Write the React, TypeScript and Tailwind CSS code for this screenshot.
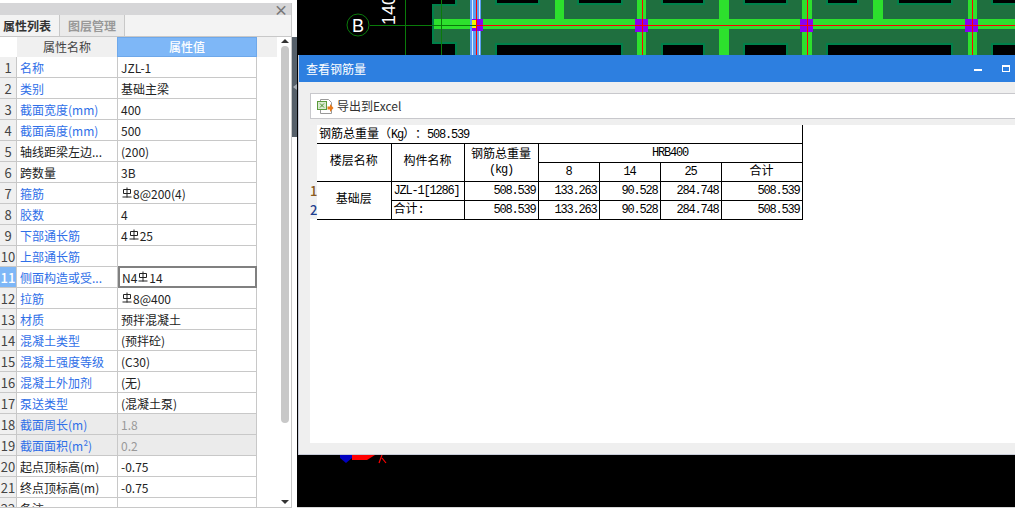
import { FC, ReactNode } from "react";

const SANS = "font-['Noto_Sans_CJK_SC','Noto_Sans',sans-serif]";
const MONO = "font-['Liberation_Mono','Noto_Sans_CJK_SC',monospace]";

// rebar grade symbol from the drawing font
const Rebar: FC = () => (
  <svg width="12" height="12" viewBox="0 0 12 12" className="inline-block -translate-y-[2px] align-middle">
    <path d="M2.5 2.5h7v4h-7z M6 0.5v10 M1.5 10h9" fill="none" stroke="#222" strokeWidth="1" />
  </svg>
);

type Row = { name: string; value?: ReactNode; blue?: boolean; off?: boolean; active?: boolean };

const rows: Row[] = [
  { name: "名称", value: "JZL-1", blue: true },
  { name: "类别", value: "基础主梁", blue: true },
  { name: "截面宽度(mm)", value: "400", blue: true },
  { name: "截面高度(mm)", value: "500", blue: true },
  { name: "轴线距梁左边...", value: "(200)" },
  { name: "跨数量", value: "3B" },
  { name: "箍筋", value: <><Rebar />8@200(4)</>, blue: true },
  { name: "胶数", value: "4", blue: true },
  { name: "下部通长筋", value: <>4<Rebar />25</>, blue: true },
  { name: "上部通长筋", blue: true },
  { name: "侧面构造或受...", value: <>N4<Rebar />14</>, blue: true, active: true },
  { name: "拉筋", value: <><Rebar />8@400</>, blue: true },
  { name: "材质", value: "预拌混凝土", blue: true },
  { name: "混凝土类型", value: "(预拌砼)", blue: true },
  { name: "混凝土强度等级", value: "(C30)", blue: true },
  { name: "混凝土外加剂", value: "(无)", blue: true },
  { name: "泵送类型", value: "(混凝土泵)", blue: true },
  { name: "截面周长(m)", value: "1.8", blue: true, off: true },
  { name: "截面面积(m²)", value: "0.2", blue: true, off: true },
  { name: "起点顶标高(m)", value: "-0.75" },
  { name: "终点顶标高(m)", value: "-0.75" },
  { name: "备注" },
];

const PropertyPanel: FC = () => (
  <div className={`flex h-full w-[297px] shrink-0 flex-col overflow-hidden bg-white pt-[3px] text-[12px] ${SANS}`}>
    <div className="flex h-[12px] w-[292px] shrink-0 items-center justify-end border-r border-[#c8c8c8] bg-[#d6d6d8] pr-[3px]">
      <span className="text-[14px] font-bold leading-none text-[#777]">×</span>
    </div>
    <div className="flex h-[22px] w-[292px] shrink-0 border-b border-r border-[#c8c8c8] bg-[#f3f3f3]">
      <div className="flex w-[60px] items-center border-r border-[#c8c8c8] bg-[#f3f3f3] pl-[3px] text-[12px] font-bold text-[#333]">
        属性列表
      </div>
      <div className="flex w-[65px] items-center justify-center border-r border-[#c8c8c8] bg-[#eaeaea] text-[12px] font-bold text-[#999]">
        图层管理
      </div>
    </div>
    <div className="flex min-h-0 flex-1">
      <div className="relative flex w-[292px] flex-col overflow-hidden border-b border-r border-[#c8c8c8]">
        <div className="flex h-[20px] w-[277px] shrink-0 bg-[#f0f0f0]">
          <div className="w-[17px] bg-white" />
          <div className="flex w-[100px] items-center justify-center text-[12px] text-[#444]">属性名称</div>
          <div className="flex w-[140px] items-center justify-center border border-[#6ea8ea] bg-[#7eb7f7] font-medium text-white">
            属性值
          </div>
        </div>
        <div className="min-h-0 flex-1 overflow-hidden">
          {rows.map((row, i) => (
            <div key={row.name} className="flex h-[21px] w-[257px] shrink-0 border-b border-[#c8c8c8]">
              <div
                className={
                  row.active
                    ? "flex w-[16px] items-center justify-center overflow-hidden bg-[#7eb7f7] pt-px text-[13px] font-medium text-white"
                    : "flex w-[16px] items-center justify-center overflow-hidden bg-[#f0f0f0] pt-px text-[13px] text-[#444]"
                }
              >
                {i + 1}
              </div>
              <div
                className={`flex w-[102px] items-center whitespace-nowrap border-x border-[#c8c8c8] pl-[3px] pt-px ${
                  row.blue ? "text-[#2f6fe8]" : "text-[#222]"
                } ${row.off ? "bg-[#ebebeb]" : ""}`}
              >
                {row.name}
              </div>
              <div
                className={
                  row.active
                    ? "-mt-px flex h-[22px] flex-1 items-center whitespace-pre border-2 border-[#808080] pl-[2px] pt-px text-[#222]"
                    : `flex flex-1 items-center whitespace-pre border-r border-[#c8c8c8] pl-[3px] pt-px ${
                        row.off ? "bg-[#ebebeb] text-[#999]" : "text-[#222]"
                      }`
                }
              >
                <span>{row.value}</span>
              </div>
            </div>
          ))}
        </div>
        <div className="absolute left-[280px] top-0 flex h-full w-[9px] flex-col items-center">
          <svg width="8" height="8" viewBox="0 0 8 8" className="shrink-0">
            <path d="M0 6 4 2l4 4z" fill="#333" />
          </svg>
          <div className="mt-[1px] h-[377px] w-[8px] rounded-[4px] bg-[#c8c8c8]" />
          <div className="flex-1" />
          <svg width="8" height="8" viewBox="0 0 8 8" className="mb-[1px] shrink-0">
            <path d="M0 2 4 6l4-4z" fill="#333" />
          </svg>
        </div>
      </div>
      <div className="flex w-[5px] flex-col">
        <div className="flex h-[100px] w-full items-center justify-center bg-[#56606a]">
          <svg width="4" height="6" viewBox="0 0 4 6">
            <path d="M4 0 0 3l4 3z" fill="#a8aeb6" />
          </svg>
        </div>
      </div>
    </div>
  </div>
);

// the CAD canvas behind the dialog
const Drawing: FC = () => {
  const ox = 297;
  const bottomWindows: [number, number][] = [[496, 622], [662, 704], [744, 787], [827, 952], [992, 1016]];
  const topWindows: [number, number][] = [[496, 539], [578, 622], [662, 704], [744, 787], [827, 858], [898, 952], [992, 1016]];
  const redX = [642, 807, 972];
  return (
    <svg width="718" height="508" viewBox={`${ox} 0 718 508`} className="absolute left-0 top-0">
      <rect x="456" y="0" width="560" height="56" fill="#1f6f3f" />
      <rect x="433" y="5" width="60" height="38" fill="#1f6f3f" />
      <path d="M456 0V5H433V43H456V56" fill="none" stroke="#00804a" strokeWidth="2" />
      {topWindows.map(([a, b]) => (
        <rect key={a} x={a} y={-4} width={b - a} height={8} fill="#000" stroke="#00804a" strokeWidth="2" />
      ))}
      {bottomWindows.map(([a, b]) => (
        <rect key={a} x={a} y={44} width={b - a} height={20} fill="#000" stroke="#00804a" strokeWidth="2" />
      ))}
      <rect x="434" y="19" width="581" height="10" fill="#2de02d" />
      {[[637, 9], [802, 10], [968, 9], [719, 10]].map(([x, w]) => (
        <rect key={x} x={x} y={0} width={w} height={56} fill="#2de02d" />
      ))}
      {[[555, 9], [873, 10]].map(([x, w]) => (
        <rect key={x} x={x} y={0} width={w} height={20} fill="#2de02d" />
      ))}
      <rect x="470" y="0" width="11" height="56" fill="#5b9df0" />
      <rect x="472" y="0" width="1" height="56" fill="#dbe9fb" />
      <rect x="479" y="0" width="1" height="56" fill="#dbe9fb" />
      <rect x="472" y="19" width="11" height="12" fill="#8a00f0" />
      <rect x="472" y="20" width="5" height="8" fill="#f5f500" />
      {redX.map((x) => (
        <rect key={x} x={x - 7} y={19} width={13} height={13} fill="#8a00f0" />
      ))}
      <rect x="476" y="0" width="1" height="56" fill="#ff0000" />
      {redX.map((x) => (
        <rect key={x} x={x} y={0} width={1} height={56} fill="#ff0000" />
      ))}
      <rect x="370" y="25" width="106" height="1" fill="#0a7a0a" />
      <rect x="476" y="25" width="540" height="1" fill="#ff0000" />
      <rect x="405" y="0" width="1" height="56" fill="#0a7a0a" />
      <rect x="441" y="0" width="1" height="56" fill="#0a7a0a" />
      <circle cx="358" cy="25" r="11" fill="none" stroke="#0a7a0a" strokeWidth="1" />
      <text x="358" y="32" textAnchor="middle" fill="#fff" fontSize="18" fontFamily="Liberation Sans">B</text>
      <text transform="translate(395 25) rotate(-90)" fill="#fff" fontSize="18" fontFamily="Liberation Sans">140</text>
      <path d="M340 454h12v4l-6 5-6-5z" fill="#0000c0" />
      <path d="M352 455h23l-8 5h-15z" fill="#ff0000" />
      <path d="M382 455l-3 8M382 458l4 5" stroke="#ff0000" strokeWidth="1.2" fill="none" />
    </svg>
  );
};

const td = "border border-black";
const latin = "text-[12px] tracking-[-1.2px]";

const Num: FC<{ children: ReactNode }> = ({ children }) => (
  <td className={`${td} pr-[2px] text-right ${latin}`}>{children}</td>
);

const SteelTable: FC = () => (
  <table className={`table-fixed border-collapse text-[12px] text-black [text-spacing-trim:space-all] ${MONO}`}>
    <colgroup>
      {[74, 73, 74, 61, 61, 61, 81].map((w, i) => (
        <col key={i} style={{ width: w }} />
      ))}
    </colgroup>
    <tbody>
      <tr className="h-[18px]">
        <td colSpan={7} className="border-b border-r border-black pl-[2px] pt-[2px] text-left leading-none">
          钢筋总重量（<span className={latin}>Kg</span>）：<span className={latin}>508.539</span>
        </td>
      </tr>
      <tr className="h-[19px]">
        <td rowSpan={2} className={`${td} border-l-0 text-center`}>楼层名称</td>
        <td rowSpan={2} className={`${td} text-center`}>构件名称</td>
        <td rowSpan={2} className={`${td} pt-[2px] text-center leading-[15px]`}>
          钢筋总重量
          <br />
          <span className={latin}>(kg)</span>
        </td>
        <td colSpan={4} className={`${td} text-center ${latin}`}>HRB400</td>
      </tr>
      <tr className="h-[19px]">
        <td className={`${td} text-center ${latin}`}>8</td>
        <td className={`${td} text-center ${latin}`}>14</td>
        <td className={`${td} text-center ${latin}`}>25</td>
        <td className={`${td} text-center`}>合计</td>
      </tr>
      <tr className="h-[19px]">
        <td rowSpan={2} className={`${td} border-l-0 text-center`}>基础层</td>
        <td className={`${td} pl-[2px] text-left ${latin}`}>JZL-1[1286]</td>
        <Num>508.539</Num>
        <Num>133.263</Num>
        <Num>90.528</Num>
        <Num>284.748</Num>
        <Num>508.539</Num>
      </tr>
      <tr className="h-[19px]">
        <td className={`${td} pl-[2px] text-left`}>合计:</td>
        <Num>508.539</Num>
        <Num>133.263</Num>
        <Num>90.528</Num>
        <Num>284.748</Num>
        <Num>508.539</Num>
      </tr>
    </tbody>
  </table>
);

const SteelDialog: FC = () => (
  <div className="absolute left-[1px] top-[55px] flex h-[400px] w-[717px] flex-col border-b border-l border-[#c8ccd8] bg-[#efefef]">
    <div className={`flex h-[27px] shrink-0 items-center justify-between bg-[#2d7fe0] pl-[7px] text-[12px] text-white ${SANS}`}>
      <span>查看钢筋量</span>
      <div className="flex items-center gap-[20px] pr-[5px]">
        <span className="mt-[3px] h-[2px] w-[8px] bg-white" />
        <span className="h-[7px] w-[8px] border border-t-2 border-white" />
      </div>
    </div>
    <div className="flex min-h-0 flex-1 flex-col pl-[11px] pt-[11px]">
      <div className={`flex h-[26px] shrink-0 items-center border-y border-l border-[#c8c8cc] bg-white pl-[6px] text-[12px] text-[#333] ${SANS}`}>
        <svg width="17" height="17" viewBox="0 0 17 17" className="mr-[3px]">
          <path d="M3.5 1.5h8l3 3v11h-11z" fill="#fff" stroke="#999" />
          <rect x="0.5" y="3.5" width="9" height="8" fill="#d8ead0" stroke="#5a9a3a" />
          <path d="M3 5.5l4 4M7 5.5l-4 4" stroke="#4f8f30" />
          <path d="M10.5 8.5h2.5V6l3.5 4-3.5 4v-2.5h-2.5z" fill="#e87a1a" />
        </svg>
        导出到Excel
      </div>
      <div className="mb-[11px] mt-[6px] flex min-h-0 flex-1 bg-white">
        <div className={`flex h-[94px] w-[7px] shrink-0 flex-col bg-[#f0f0f0] pt-[56px] text-[13px] font-medium leading-[19px] ${SANS}`}>
          <span className="text-[#8a5a1d]">1</span>
          <span className="text-[#1f3f8f]">2</span>
        </div>
        <div className="min-w-0 flex-1">
          <SteelTable />
        </div>
      </div>
    </div>
  </div>
);

export default function App() {
  return (
    <div className="flex h-[508px] w-[1015px] overflow-hidden bg-white">
      <PropertyPanel />
      <div className="relative h-full flex-1 bg-black">
        <Drawing />
        <SteelDialog />
        <div className="absolute bottom-0 left-0 h-px w-full bg-[#d8d8d8]" />
      </div>
    </div>
  );
}
